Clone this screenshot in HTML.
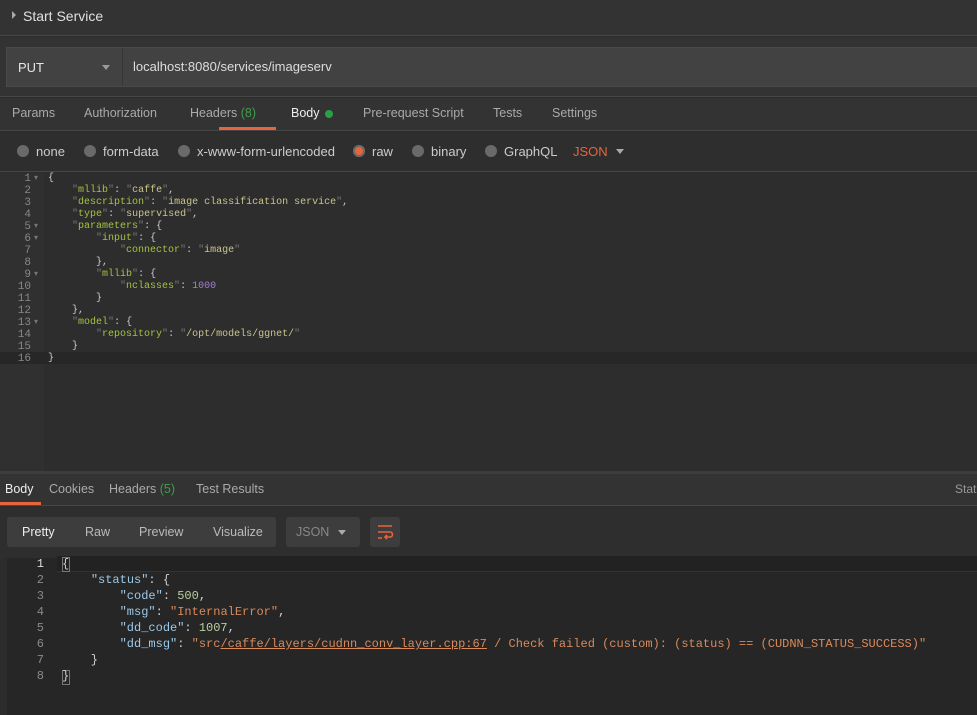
<!DOCTYPE html>
<html><head><meta charset="utf-8"><style>
*{margin:0;padding:0;box-sizing:border-box}
body{width:977px;height:715px;background:#2c2c2c;font-family:"Liberation Sans",sans-serif;color:#ccc;position:relative;overflow:hidden;font-size:13px}
.a{position:absolute}
.mono{font-family:"Liberation Mono",monospace;white-space:pre}
.k{color:#a3c23e}.q{color:#777}.s{color:#c9c58c}.n{color:#a57dd3}.p{color:#ccc}
.rk{color:#9cc8e8}.rs{color:#d98a5c}.rn{color:#b9cf9f}.rp{color:#d0d0d0}
.radio{display:inline-block;width:12px;height:12px;border-radius:50%;background:#6a6a6a;vertical-align:-1px;margin-right:7px}
</style></head><body>
<div class="a" style="left:0;top:0;width:977px;height:36px;background:#333;border-bottom:1px solid #474747"></div>
<div class="a" style="left:12px;top:11px;width:0;height:0;border-top:4px solid transparent;border-bottom:4px solid transparent;border-left:4px solid #aaa"></div>
<div class="a" style="left:23px;top:8px;font-size:14px;color:#e0e0e0">Start Service</div>
<div class="a" style="left:0;top:37px;width:977px;height:60px;background:#333;border-bottom:1px solid #474747"></div>
<div class="a" style="left:6px;top:47px;width:980px;height:40px;background:#424242;border:1px solid #4a4a4a"></div>
<div class="a" style="left:122px;top:48px;width:1px;height:38px;background:#363636"></div>
<div class="a" style="left:18px;top:60px;font-size:13px;color:#e6e6e6">PUT</div>
<div class="a" style="left:102px;top:65px;border-left:4px solid transparent;border-right:4px solid transparent;border-top:5px solid #999"></div>
<div class="a" style="left:133px;top:59px;font-size:13px;color:#ddd">localhost:8080/services/imageserv</div>
<div class="a" style="left:0;top:98px;width:977px;height:33px;background:#333;border-bottom:1px solid #474747"></div>
<div class="a" style="top:106px;left:0;font-size:12.5px;color:#aaa;width:977px">
<span class="a" style="left:12px">Params</span><span class="a" style="left:84px">Authorization</span><span class="a" style="left:190px;white-space:nowrap">Headers <span style="color:#3e9e4a">(8)</span></span><span class="a" style="left:291px;color:#eee">Body</span><span class="a" style="left:325px;top:4px;width:8px;height:8px;border-radius:50%;background:#27a046"></span><span class="a" style="left:363px;white-space:nowrap">Pre-request Script</span><span class="a" style="left:493px">Tests</span><span class="a" style="left:552px">Settings</span></div>
<div class="a" style="left:219px;top:127px;width:57px;height:3px;background:#e8643c"></div>
<div class="a" style="left:0;top:132px;width:977px;height:40px;background:#2e2e2e;border-bottom:1px solid #474747"></div>
<div class="a" style="top:144px;left:0;font-size:13px;color:#ccc">
<span class="a" style="left:17px;white-space:nowrap"><i class="radio"></i>none</span>
<span class="a" style="left:84px;white-space:nowrap"><i class="radio"></i>form-data</span>
<span class="a" style="left:178px;white-space:nowrap"><i class="radio"></i>x-www-form-urlencoded</span>
<span class="a" style="left:353px;white-space:nowrap"><i class="radio" style="background:#e8643c;box-shadow:0 0 0 2px #6a6a6a inset"></i>raw</span>
<span class="a" style="left:412px;white-space:nowrap"><i class="radio"></i>binary</span>
<span class="a" style="left:485px;white-space:nowrap"><i class="radio"></i>GraphQL</span>
<span class="a" style="left:573px;color:#e8643c">JSON</span></div>
<div class="a" style="left:616px;top:149px;border-left:4px solid transparent;border-right:4px solid transparent;border-top:5px solid #aaa"></div>
<div class="a" style="left:0;top:173px;width:977px;height:298px;background:#2d2d2d"></div>
<div class="a" style="left:0;top:173px;width:44px;height:298px;background:#303030"></div>
<div class="a" style="left:0;top:352px;width:977px;height:12px;background:#272727"></div>
<div class="a mono" style="left:0;top:173px;width:31px;text-align:right;font-size:11px;line-height:12px;color:#888">1
2
3
4
5
6
7
8
9
10
11
12
13
14
15
16</div>
<div class="a mono" style="left:34px;top:173px;font-size:8px;line-height:12px;color:#777">▾



▾
▾


▾



▾</div>
<div class="a mono" style="left:48px;top:173px;font-size:10px;line-height:12px;color:#ccc"><span class="p">{</span>
    <span class="q">"</span><span class="k">mllib</span><span class="q">"</span>: <span class="q">"</span><span class="s">caffe</span><span class="q">"</span>,
    <span class="q">"</span><span class="k">description</span><span class="q">"</span>: <span class="q">"</span><span class="s">image classification service</span><span class="q">"</span>,
    <span class="q">"</span><span class="k">type</span><span class="q">"</span>: <span class="q">"</span><span class="s">supervised</span><span class="q">"</span>,
    <span class="q">"</span><span class="k">parameters</span><span class="q">"</span>: {
        <span class="q">"</span><span class="k">input</span><span class="q">"</span>: {
            <span class="q">"</span><span class="k">connector</span><span class="q">"</span>: <span class="q">"</span><span class="s">image</span><span class="q">"</span>
        },
        <span class="q">"</span><span class="k">mllib</span><span class="q">"</span>: {
            <span class="q">"</span><span class="k">nclasses</span><span class="q">"</span>: <span class="n">1000</span>
        }
    },
    <span class="q">"</span><span class="k">model</span><span class="q">"</span>: {
        <span class="q">"</span><span class="k">repository</span><span class="q">"</span>: <span class="q">"</span><span class="s">/opt/models/ggnet/</span><span class="q">"</span>
    }
}</div>
<div class="a" style="left:0;top:471px;width:977px;height:3px;background:#3d3d3d"></div>
<div class="a" style="left:0;top:474px;width:977px;height:32px;background:#333;border-bottom:1px solid #474747"></div>
<div class="a" style="top:482px;left:0;font-size:12.5px;color:#aaa;width:977px">
<span class="a" style="left:5px;color:#eee">Body</span><span class="a" style="left:49px">Cookies</span><span class="a" style="left:109px;white-space:nowrap">Headers <span style="color:#3e9e4a">(5)</span></span><span class="a" style="left:196px;white-space:nowrap">Test Results</span><span class="a" style="left:955px;color:#999;font-size:12px">Status</span></div>
<div class="a" style="left:0;top:502px;width:41px;height:3px;background:#e8643c"></div>
<div class="a" style="left:0;top:507px;width:977px;height:51px;background:#2e2e2e"></div>
<div class="a" style="left:7px;top:517px;width:269px;height:30px;background:#3d3d3d;border-radius:3px"></div>
<div class="a" style="top:525px;left:0;font-size:12.5px;color:#bbb">
<span class="a" style="left:22px;color:#eee">Pretty</span><span class="a" style="left:85px">Raw</span><span class="a" style="left:139px">Preview</span><span class="a" style="left:213px">Visualize</span></div>
<div class="a" style="left:286px;top:517px;width:74px;height:30px;background:#3d3d3d;border-radius:3px"></div>
<div class="a" style="left:296px;top:525px;font-size:12.5px;color:#888">JSON</div>
<div class="a" style="left:338px;top:530px;border-left:4px solid transparent;border-right:4px solid transparent;border-top:5px solid #aaa"></div>
<div class="a" style="left:370px;top:517px;width:30px;height:30px;background:#3d3d3d;border-radius:3px"></div>
<svg class="a" style="left:376px;top:523px" width="18" height="18" viewBox="0 0 18 18" fill="none" stroke="#e8643c" stroke-width="1.6"><path d="M2 3h14M2 9h12a2.5 2.5 0 0 1 0 5H9M11 12l-2 2 2 2M2 15h4"/></svg>
<div class="a" style="left:7px;top:558px;width:970px;height:157px;background:#262626"></div>
<div class="a" style="left:57px;top:556px;width:920px;height:16px;background:#222;border-bottom:1px solid #333"></div>
<div class="a mono" style="left:0;top:556px;width:44px;text-align:right;font-size:12px;line-height:16px;color:#8a8a8a"><span style="color:#ddd">1</span>
2
3
4
5
6
7
8</div>
<div class="a" style="left:62px;top:557px;width:8px;height:15px;border:1px solid #777"></div>
<div class="a" style="left:62px;top:670px;width:8px;height:15px;border:1px solid #777"></div>
<div class="a mono" style="left:62px;top:556px;font-size:12px;line-height:16px;color:#d0d0d0">{
    <span class="rk">"status"</span>: {
        <span class="rk">"code"</span>: <span class="rn">500</span>,
        <span class="rk">"msg"</span>: <span class="rs">"InternalError"</span>,
        <span class="rk">"dd_code"</span>: <span class="rn">1007</span>,
        <span class="rk">"dd_msg"</span>: <span class="rs">"src<span style="text-decoration:underline">/caffe/layers/cudnn_conv_layer.cpp:67</span> / Check failed (custom): (status) == (CUDNN_STATUS_SUCCESS)"</span>
    }
}</div>
</body></html>
